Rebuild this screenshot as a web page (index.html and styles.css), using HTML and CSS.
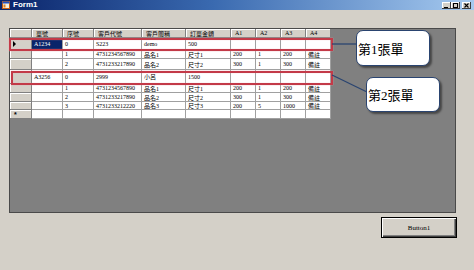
FILE: index.html
```html
<!DOCTYPE html>
<html>
<head>
<meta charset="utf-8">
<link rel="stylesheet" href="styles.css">
</head>
<body>
<div class="window">
  <div class="titlebar">
    <svg class="appicon" width="8" height="8" viewBox="0 0 8 8"><rect x="0.5" y="0.5" width="7" height="7" fill="#f4f0e0" stroke="#c86010"/><rect x="0.5" y="0.5" width="7" height="2" fill="#2050c0"/><rect x="1.5" y="3.5" width="2" height="3" fill="#e08020"/></svg>
    <span class="title">Form1</span>
    <div class="controls">
      <span class="ctl"><svg width="9" height="7" viewBox="0 0 9 7"><rect x="2" y="5" width="4" height="1" fill="#000"/></svg></span>
      <span class="ctl"><svg width="9" height="7" viewBox="0 0 9 7"><rect x="2.5" y="1.5" width="4" height="4" fill="none" stroke="#000"/><rect x="2" y="1" width="5" height="1" fill="#000"/></svg></span>
      <span class="ctl close"><svg width="9" height="7" viewBox="0 0 9 7"><path d="M2.5 1.5 L6.5 5.5 M6.5 1.5 L2.5 5.5" stroke="#000" stroke-width="1.1"/></svg></span>
    </div>
  </div>
  <div class="client">
    <div class="gridview">
      <div class="cells">
        <div class="hd rh"></div><div class="hd">單號</div><div class="hd">序號</div><div class="hd">客戶代號</div><div class="hd">客戶簡稱</div><div class="hd">訂單金額</div><div class="hd">A1</div><div class="hd">A2</div><div class="hd">A3</div><div class="hd">A4</div>

        <div class="rh"><span class="arrow"></span></div><div class="c sel">A1234</div><div class="c">0</div><div class="c">S223</div><div class="c">demo</div><div class="c">500</div><div class="c"></div><div class="c"></div><div class="c"></div><div class="c"></div>

        <div class="rh"></div><div class="c"></div><div class="c">1</div><div class="c">4731234567890</div><div class="c">品名1</div><div class="c">尺寸1</div><div class="c">200</div><div class="c">1</div><div class="c">200</div><div class="c">備註</div>

        <div class="rh"></div><div class="c"></div><div class="c">2</div><div class="c">4731233217890</div><div class="c">品名2</div><div class="c">尺寸2</div><div class="c">300</div><div class="c">1</div><div class="c">300</div><div class="c">備註</div>

        <div class="rh"></div><div class="c">A3256</div><div class="c">0</div><div class="c">2999</div><div class="c">小呂</div><div class="c">1500</div><div class="c"></div><div class="c"></div><div class="c"></div><div class="c"></div>

        <div class="rh"></div><div class="c"></div><div class="c">1</div><div class="c">4731234567890</div><div class="c">品名1</div><div class="c">尺寸1</div><div class="c">200</div><div class="c">1</div><div class="c">200</div><div class="c">備註</div>

        <div class="rh"></div><div class="c"></div><div class="c">2</div><div class="c">4731233217890</div><div class="c">品名2</div><div class="c">尺寸2</div><div class="c">300</div><div class="c">1</div><div class="c">300</div><div class="c">備註</div>

        <div class="rh"></div><div class="c"></div><div class="c">3</div><div class="c">4731233212220</div><div class="c">品名3</div><div class="c">尺寸3</div><div class="c">200</div><div class="c">5</div><div class="c">1000</div><div class="c">備註</div>

        <div class="rh star">*</div><div class="c"></div><div class="c"></div><div class="c"></div><div class="c"></div><div class="c"></div><div class="c"></div><div class="c"></div><div class="c"></div><div class="c"></div>
      </div>
    </div>
    <div class="footer">
      <button class="btn">Button1</button>
    </div>
  </div>

  <div class="mark mark1"></div>
  <div class="mark mark2"></div>
  <svg class="connectors" width="474" height="270" viewBox="0 0 474 270">
    <line x1="332" y1="44" x2="357" y2="44" stroke="#2a4470" stroke-width="1.3"/>
    <line x1="332" y1="75" x2="367" y2="92" stroke="#2a4470" stroke-width="1.3"/>
  </svg>
  <div class="callout c1">第1張單</div>
  <div class="callout c2">第2張單</div>
</div>
</body>
</html>
```

FILE: styles.css
```css
html, body {
  margin: 0;
  padding: 0;
}
body {
  width: 474px;
  height: 270px;
  overflow: hidden;
  background: #d4d0c8;
  font-family: "Liberation Serif", "Noto Sans CJK TC", serif;
}
.window {
  position: relative;
  width: 474px;
  height: 270px;
  background: #d4d0c8;
}
.titlebar {
  height: 10px;
  display: flex;
  align-items: center;
  background: linear-gradient(to right, #0a246a 0%, #3a6ab0 45%, #a6caf0 100%);
  padding-left: 2px;
  box-sizing: border-box;
}
.appicon {
  display: block;
  margin-right: 3px;
}
.title {
  color: #fff;
  font-family: "Liberation Sans", sans-serif;
  font-weight: bold;
  font-size: 8px;
  line-height: 10px;
}
.controls {
  margin-left: auto;
  margin-right: 3px;
  display: flex;
  gap: 0;
}
.ctl {
  width: 9px;
  height: 7px;
  background: #d4d0c8;
  box-shadow: inset -1px -1px #404040, inset 1px 1px #fff;
  display: block;
}
.ctl svg { display: block; }
.ctl.close { margin-left: 2px; }

.client {
  padding: 18px 17px 0 9px;
}
.gridview {
  width: 447px;
  height: 185px;
  box-sizing: border-box;
  border: 1px solid #4a4a4a;
  background: #808080;
}
.cells {
  display: grid;
  grid-template-columns: 22px 31px 31px 48px 44px 45px 25px 25px 25px 25px;
  grid-template-rows: 9px 12px 9px 11px 14px 9px 9px 8px 9px;
  width: 321px;
}
.cells > div {
  box-sizing: border-box;
  display: flex;
  align-items: center;
  white-space: nowrap;
  overflow: hidden;
  font-size: 6px;
  color: #000;
}
.c {
  background: #fff;
  border-right: 1px solid #a0a0a0;
  border-bottom: 1px solid #a0a0a0;
  padding-left: 2px;
}
.c.sel {
  background: #0a246a;
  color: #fff;
}
.hd {
  background: #d4d0c8;
  border-right: 1px solid #808080;
  border-bottom: 1px solid #808080;
  box-shadow: inset 1px 1px #fff;
  padding-left: 4px;
}
.rh {
  background: #d4d0c8;
  border-right: 1px solid #808080;
  border-bottom: 1px solid #808080;
  box-shadow: inset 1px 1px #fff;
  padding-left: 3px;
}
.arrow {
  display: block;
  width: 0;
  height: 0;
  border-left: 3px solid #000;
  border-top: 3px solid transparent;
  border-bottom: 3px solid transparent;
}
.rh.star {
  font-family: "Liberation Sans", sans-serif;
  font-size: 7px;
  font-weight: bold;
  padding-left: 4px;
}

.footer {
  display: flex;
  justify-content: flex-end;
  padding-top: 4px;
  padding-right: 0;
  width: 448px;
}
.btn {
  width: 76px;
  height: 21px;
  margin: 0;
  padding: 0;
  background: #d4d0c8;
  border: 1px solid #000;
  box-shadow: inset 1px 1px #fff, inset -1px -1px #404040, inset -2px -2px #808080;
  font-family: "Liberation Serif", serif;
  font-size: 7px;
  color: #000;
}

.mark {
  position: absolute;
  box-sizing: border-box;
  border: 2px solid #c33a48;
  box-shadow: 0 0 1px #e8a0a8, inset 0 0 1px #e8a0a8;
}
.mark1 {
  left: 9px;
  top: 38px;
  width: 324px;
  height: 13px;
}
.mark2 {
  left: 11px;
  top: 71px;
  width: 322px;
  height: 14px;
}
.connectors {
  position: absolute;
  left: 0;
  top: 0;
  pointer-events: none;
}
.callout {
  position: absolute;
  box-sizing: border-box;
  width: 74px;
  height: 36px;
  background: #fff;
  border: 1.5px solid #2a4470;
  border-radius: 7px;
  box-shadow: 2px 2px 2px rgba(0, 0, 0, 0.45);
  font-family: "Liberation Serif", "Noto Sans CJK TC", serif;
  font-size: 13px;
  color: #000;
  display: flex;
  align-items: center;
  padding-left: 1px;
}
.c1 {
  left: 356px;
  top: 30px;
}
.c2 {
  left: 366px;
  top: 77px;
  height: 35px;
}
```
